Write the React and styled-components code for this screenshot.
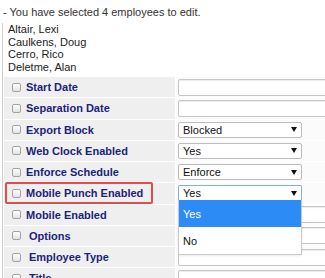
import React from "react";
import styled, { createGlobalStyle } from "styled-components";

const GlobalStyle = createGlobalStyle`
  html, body {
    margin: 0;
    padding: 0;
    overflow: hidden;
    background: #ffffff;
  }
  body {
    font-family: "Liberation Sans", Arial, sans-serif;
  }
`;

const Page = styled.div`
  padding: 5px 0 0 2px;
  width: 323px;
  height: 273px;
  overflow: hidden;
`;

const Intro = styled.div`
  margin-left: 1px;
  font-size: 11px;
  line-height: 14px;
  color: #333;
  white-space: nowrap;
`;

const Panel = styled.div`
  border-left: 1px solid #cfcfcf;
`;

const NameList = styled.div`
  margin: 4px 0 0 5px;
  font-size: 11px;
  line-height: 12.5px;
  color: #222;
`;

const Table = styled.div`
  margin: 4px 0 0 1px;
  display: grid;
  grid-template-columns: 171px 180px;
  grid-auto-rows: 20.25px;
  gap: 1px;
`;

const LabelCell = styled.div`
  position: relative;
  display: flex;
  align-items: center;
  padding-left: 8px;
  background: #efefef;
`;

const ValueCell = styled.div`
  position: relative;
  display: flex;
  align-items: center;
  padding-left: 2px;
  background: #fbfbfb;
`;

const Check = styled.span`
  box-sizing: border-box;
  width: 9px;
  height: 9px;
  flex: none;
  border: 1px solid #a3a3a3;
  border-radius: 2px;
  background: linear-gradient(#ffffff, #e2e2e2);
`;

const LabelText = styled.span`
  margin-left: ${(p) => (p.$wide ? "8px" : "5px")};
  font-size: 11px;
  font-weight: bold;
  color: #1b237c;
  white-space: nowrap;
`;

const Highlight = styled.span`
  position: absolute;
  left: 1px;
  top: -1px;
  width: 148px;
  height: 22px;
  box-sizing: border-box;
  border: 2px solid #e24c4c;
  border-radius: 2px;
  pointer-events: none;
`;

const TextInput = styled.div`
  box-sizing: border-box;
  width: 170px;
  height: 17px;
  flex: none;
  border: 1px solid #c6c6c6;
  border-radius: 2px;
  background: #fff;
  box-shadow: inset 0 1px 1px rgba(0, 0, 0, 0.08);
`;

const SelectBox = styled.div`
  box-sizing: border-box;
  width: 124px;
  height: 16px;
  flex: none;
  display: flex;
  align-items: center;
  justify-content: space-between;
  padding: 0 4px 0 4px;
  border: 1px solid ${(p) => (p.$focused ? "#86aee6" : "#bdbdbd")};
  border-bottom-color: ${(p) => (p.$focused ? "#2a2a2a" : "#bdbdbd")};
  border-radius: ${(p) => (p.$focused ? "2px 2px 0 0" : "2px")};
  background: #fff;
  font-size: 11px;
  color: #111;
`;

const Arrow = styled.span`
  width: 0;
  height: 0;
  border-left: 3px solid transparent;
  border-right: 3px solid transparent;
  border-top: 5px solid #111;
`;

const Dropdown = styled.div`
  position: absolute;
  left: 2px;
  top: 17px;
  width: 124px;
  box-sizing: border-box;
  border: 1px solid #c9c9c9;
  border-top: none;
  background: #fff;
  z-index: 2;
  box-shadow: 0 1px 2px rgba(0, 0, 0, 0.08);
`;

const Option = styled.div`
  height: 27px;
  display: flex;
  align-items: center;
  padding-left: 4px;
  font-size: 11px;
  color: ${(p) => (p.$active ? "#ffffff" : "#111")};
  background: ${(p) => (p.$active ? "#2d8bf5" : "#ffffff")};
`;

const Select = ({ value, focused }) => (
  <SelectBox $focused={focused}>
    <span>{value}</span>
    <Arrow />
  </SelectBox>
);

const rows = [
  { label: "Start Date", kind: "text" },
  { label: "Separation Date", kind: "text" },
  { label: "Export Block", kind: "select", value: "Blocked" },
  { label: "Web Clock Enabled", kind: "select", value: "Yes" },
  { label: "Enforce Schedule", kind: "select", value: "Enforce" },
  { label: "Mobile Punch Enabled", kind: "select", value: "Yes", open: true, highlight: true },
  { label: "Mobile Enabled", kind: "text" },
  { label: "Options", kind: "text", wide: true },
  { label: "Employee Type", kind: "text", wide: true },
  { label: "Title", kind: "text", wide: true },
];

export default function App() {
  return (
    <>
      <GlobalStyle />
      <Page>
        <Intro>- You have selected 4 employees to edit.</Intro>
        <Panel>
          <NameList>
            <div>Altair, Lexi</div>
            <div>Caulkens, Doug</div>
            <div>Cerro, Rico</div>
            <div>Deletme, Alan</div>
          </NameList>
          <Table>
            {rows.map((r) => (
              <React.Fragment key={r.label}>
                <LabelCell>
                  <Check />
                  <LabelText $wide={r.wide}>{r.label}</LabelText>
                  {r.highlight && <Highlight />}
                </LabelCell>
                <ValueCell>
                  {r.kind === "text" ? (
                    <TextInput />
                  ) : (
                    <Select value={r.value} focused={r.open} />
                  )}
                  {r.open && (
                    <Dropdown>
                      <Option $active>Yes</Option>
                      <Option>No</Option>
                    </Dropdown>
                  )}
                </ValueCell>
              </React.Fragment>
            ))}
          </Table>
        </Panel>
      </Page>
    </>
  );
}
